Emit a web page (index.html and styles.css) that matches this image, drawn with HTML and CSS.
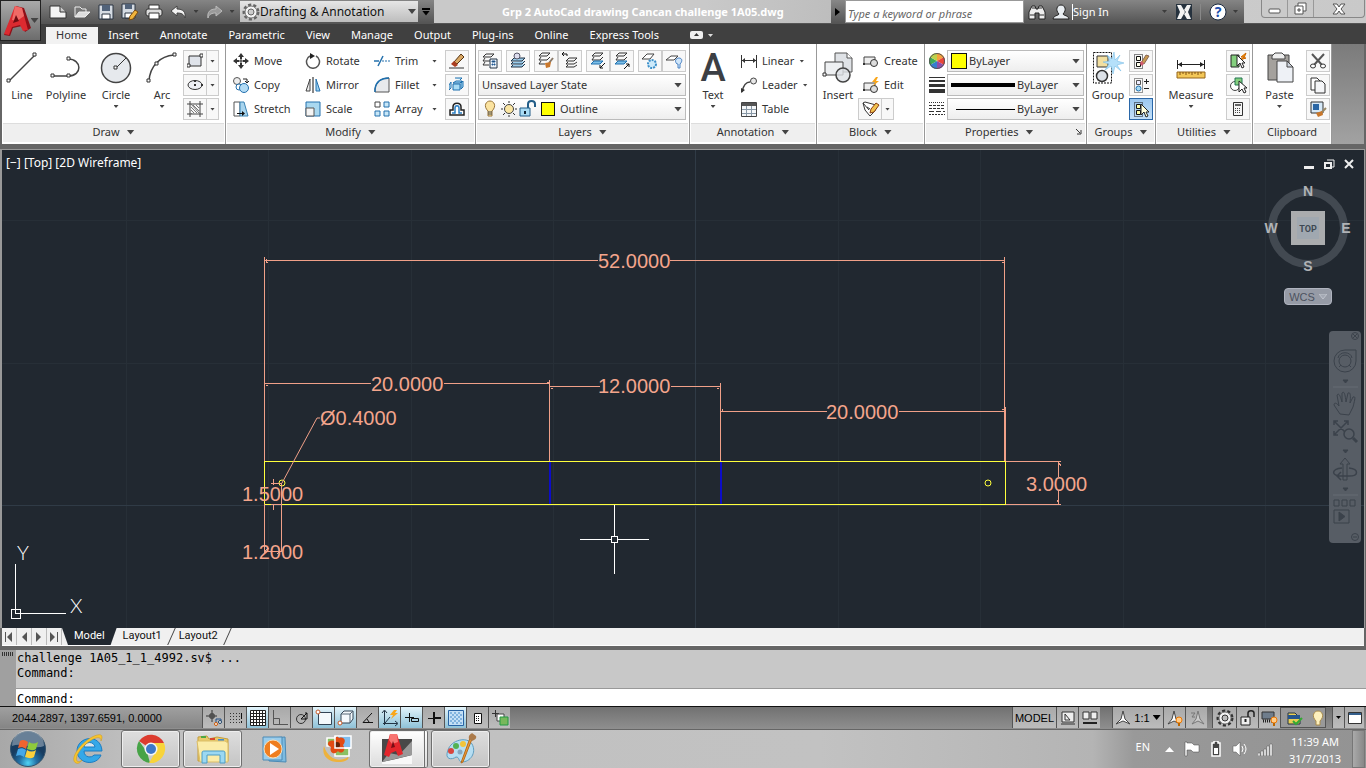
FILE: index.html
```html
<!DOCTYPE html>
<html lang="en">

<head>
    <meta charset="UTF-8">
    <meta name="viewport" content="width=device-width, initial-scale=1.0">
    <title>Grp 2 AutoCad drawing Cancan challenge 1A05.dwg</title>
    <link rel="stylesheet" href="styles.css">
</head>

<body>
    <div class="app">
        <header class="header">
            <button class="app-btn" aria-label="Application menu">
                <svg width="28" height="32" viewBox="0 0 28 32">
                    <path d="M13 1L21 3L28 23L22 27L19 21L10 23L7 31L1 30Z" fill="#8d1018" />
                    <path d="M12 1L19 3L25 25L20 26L17 20L9 22L6 30L1 29Z" fill="#dc2a30" />
                    <path d="M12 1L19 3L21 11L14 16L9 15Z" fill="#f06a66" />
                    <path d="M13 10L16 16L10 18Z" fill="#6d0c12" />
                </svg>
                <span class="arrow big"></span>
            </button>

            <div class="title-row">
                <div class="quick">
                    <button aria-label="New"><svg width="18" height="16" viewBox="0 0 18 16"><path d="M1 2H11L17 8V14H1Z" fill="#f4f4f4" stroke="#333" /><path d="M11 2V8H17" fill="#ccc" stroke="#333" /></svg></button>
                    <button aria-label="Open"><svg width="18" height="16" viewBox="0 0 18 16"><path d="M2 13V3H7L9 5H13V8" fill="#777" stroke="#eee" /><path d="M2 13L6 8H17L12 13Z" fill="#ddd" stroke="#eee" /></svg></button>
                    <button aria-label="Save"><svg width="16" height="16" viewBox="0 0 16 16"><path d="M1 1H15V15H1Z" fill="#d5dbe2" stroke="#2a3442" /><path d="M4 1H12V7H4Z" fill="#52637a" /><path d="M4 10H12V15H4Z" fill="#fff" stroke="#2a3442" /></svg></button>
                    <button aria-label="Save as"><svg width="18" height="18" viewBox="0 0 18 18"><path d="M1 1H14V15H1Z" fill="#d5dbe2" stroke="#2a3442" /><path d="M4 1H11V6H4Z" fill="#52637a" /><path d="M4 10H11V15H4Z" fill="#fff" stroke="#2a3442" /><path d="M8 17L9 13L14 7L17 9L12 16Z" fill="#f0b43c" stroke="#7a4a10" /></svg></button>
                    <button aria-label="Plot"><svg width="18" height="16" viewBox="0 0 18 16"><path d="M4 1H14V6H4Z" fill="#fff" stroke="#333" /><rect x="1" y="5" width="16" height="7" rx="2" fill="#ddd" stroke="#333" /><path d="M4 9H14V15H4Z" fill="#fff" stroke="#333" /></svg></button>
                    <button aria-label="Undo"><svg width="17" height="14" viewBox="0 0 17 14"><path d="M1 6L7 1V4C13 4 16 7 15 13C14 9 11 8 7 8V11Z" fill="#f2f2f2" stroke="#444" /></svg></button>
                    <button class="thin" aria-label="Undo list"><span class="arrow dim"></span></button>
                    <button aria-label="Redo"><svg width="17" height="14" viewBox="0 0 17 14"><path d="M16 6L10 1V4C4 4 1 7 2 13C3 9 6 8 10 8V11Z" fill="#9a9a9a" stroke="#bbb" /></svg></button>
                    <button class="thin" aria-label="Redo list"><span class="arrow dim"></span></button>
                    <div class="workspace">
                        <svg width="18" height="18" viewBox="0 0 18 18"><circle cx="9" cy="9" r="7" fill="none" stroke="#666" stroke-width="3" stroke-dasharray="3 2" /><circle cx="9" cy="9" r="6" fill="#f4f4f4" stroke="#777" /><circle cx="9" cy="9" r="3" fill="#ccc" stroke="#666" /></svg>
                        <select aria-label="Workspace"><option>Drafting &amp; Annotation</option></select>
                        <span class="arrow big"></span>
                    </div>
                    <button class="more" aria-label="Customize toolbar"><span class="bar"></span><span class="arrow big black"></span></button>
                </div>
                <h1 class="title">Grp 2 AutoCad drawing Cancan challenge 1A05.dwg</h1>
                <button class="search-toggle" aria-label="Collapse search"><svg width="6" height="8"><path d="M0 0L5 4L0 8Z" /></svg></button>
                <input class="search" type="text" placeholder="Type a keyword or phrase" aria-label="Search">
                <div class="info">
                    <button aria-label="Find"><svg width="18" height="16" viewBox="0 0 18 16"><path d="M1 15V8L4 2H7L8 5H10L11 2H14L17 8V15H11V9H7V15Z" fill="#eee" stroke="#222" /><path d="M2 11H7M11 11H16M4 4H7M11 4H14" stroke="#333" /></svg></button>
                    <button class="sign-in"><svg width="18" height="16" viewBox="0 0 18 16"><path d="M1 15C2 11 6 12 7 10C3 6 5 1 9 1S15 6 11 10C12 12 16 11 17 15Z" fill="#e9eef2" stroke="#222" /></svg><span class="user">Sign In</span><span class="arrow dim"></span></button>
                    <button aria-label="Exchange"><svg width="16" height="16" viewBox="0 0 16 16"><path d="M0 0H16V16H0Z" fill="#26323e" /><path d="M1 1H5L9 8L5 15H1L4 8Z" fill="#f3f3f3" /><path d="M15 1H11L8 6L10 8L8 10L11 15H15L12 8Z" fill="#f3f3f3" /></svg></button>
                    <span class="divider"></span>
                    <button class="help" aria-label="Help"><svg width="18" height="18" viewBox="0 0 18 18"><circle cx="9" cy="9" r="8" fill="#fff" stroke="#1b2a40" /><text x="9" y="14" text-anchor="middle" font-size="14" font-weight="700" fill="#1d4fae">?</text></svg><span class="arrow dim"></span></button>
                </div>
                <div class="window-btns">
                    <button aria-label="Minimize"><svg width="14" height="14" viewBox="0 0 14 14"><rect x="1" y="7" width="11" height="4" rx="1" fill="#fff" stroke="#555" /></svg></button>
                    <button aria-label="Restore"><svg width="14" height="14" viewBox="0 0 14 14"><path d="M4 1H12V9H4Z" fill="#fff" stroke="#555" /><path d="M1 4H9V12H1Z" fill="#fff" stroke="#555" /><path d="M4 7H6V9H4Z" fill="#ddd" stroke="#555" /></svg></button>
                    <button aria-label="Close"><svg width="14" height="14" viewBox="0 0 14 14"><path d="M1 2H5L7 5L9 2H13L9 7L13 12H9L7 9L5 12H1L5 7Z" fill="#fff" stroke="#555" /></svg></button>
                </div>
            </div>

            <nav class="tabs">
                <a href="#" class="active">Home</a>
                <a href="#">Insert</a>
                <a href="#">Annotate</a>
                <a href="#">Parametric</a>
                <a href="#">View</a>
                <a href="#">Manage</a>
                <a href="#">Output</a>
                <a href="#">Plug-ins</a>
                <a href="#">Online</a>
                <a href="#">Express Tools</a>
                <button aria-label="Minimize ribbon"><svg width="24" height="8" viewBox="0 0 24 8"><rect width="13" height="8" rx="2" fill="#eee" /><path d="M4 5L6.500 2L9 5Z" fill="#333" /><path d="M18 3H23L20.500 6Z" fill="#ddd" /></svg></button>
            </nav>
        </header>

        <main class="ribbon">
            <section class="panel draw">
                <div class="panel-body">
                    <button class="big w40"><svg width="32" height="34" viewBox="0 0 32 34"><path d="M3 31L29 5" stroke="#444" stroke-width="1.500" /><path d="M1 29H4V32H1ZM27 3H30V6H27Z" fill="#fff" stroke="#333" /></svg>Line</button>
                    <button class="big w48"><svg width="32" height="34" viewBox="0 0 32 34"><path d="M2 26H18C33 26 32 9 18 9" fill="none" stroke="#444" stroke-width="1.500" /><path d="M1 24H4V27H1ZM17 24H20V27H17ZM17 7H20V10H17Z" fill="#fff" stroke="#333" /></svg>Polyline</button>
                    <button class="big w52"><svg width="32" height="34" viewBox="0 0 32 34"><circle cx="16" cy="18" r="14.500" fill="#e6e9ed" stroke="#444" stroke-width="1.500" /><path d="M16 18L26 8" stroke="#333" /><path d="M14 16H17V19H14Z" fill="#fff" stroke="#333" /></svg>Circle<span class="arrow small"></span></button>
                    <button class="big w40"><svg width="32" height="34" viewBox="0 0 32 34"><path d="M3 31C4 16 14 6 28 5" fill="none" stroke="#444" stroke-width="1.500" /><path d="M1 29H4V32H1ZM9 12H12V15H9ZM27 3H30V6H27Z" fill="#fff" stroke="#333" /></svg>Arc<span class="arrow small"></span></button>
                    <div class="col draw-split">
                        <button class="split" aria-label="Rectangle"><svg width="16" height="16" viewBox="0 0 16 16"><path d="M2 3H14V13H2Z" fill="#dfe3ea" stroke="#333" /><path d="M0 11H3V14H0ZM13 1H16V4H13Z" fill="#fff" stroke="#333" /></svg><span class="arrow"></span></button>
                        <button class="split" aria-label="Ellipse"><svg width="16" height="16" viewBox="0 0 16 16"><ellipse cx="8" cy="8" rx="7" ry="4.500" fill="#eef0f4" stroke="#333" /><path d="M7 7H9V9H7ZM14 7H16V9H14ZM7 3H9V5H7Z" fill="#333" /></svg><span class="arrow"></span></button>
                        <button class="split" aria-label="Hatch"><svg width="16" height="16" viewBox="0 0 16 16"><path d="M3 0V16M13 0V16M0 3H16M0 13H16" stroke="#444" /><path d="M4 6L10 12M4 9L7 12M6 4L12 10M9 4L12 7M4 3L12 12M4 12L5 13" stroke="#777" /></svg><span class="arrow"></span></button>
                    </div>
                </div>
                <h2>Draw <span class="arrow big"></span></h2>
            </section>

            <section class="panel modify">
                <div class="panel-body">
                    <div class="col w72">
                        <button class="cmd"><svg width="16" height="16" viewBox="0 0 16 16"><path d="M8 0L11 4H9V6H7V4H5ZM8 16L5 12H7V10H9V12H11ZM0 8L4 5V7H6V9H4V11ZM16 8L12 11V9H10V7H12V5Z" fill="#333" /><path d="M7 7H9V9H7Z" fill="#fff" stroke="#333" /></svg>Move</button>
                        <button class="cmd"><svg width="16" height="16" viewBox="0 0 16 16"><circle cx="4" cy="4" r="3.500" fill="#eee" stroke="#555" /><path d="M10 2H14V5M12 4L14 6L16 4" fill="none" stroke="#222" /><circle cx="6" cy="10" r="3" fill="#fff" stroke="#2571ad" /><circle cx="11" cy="11" r="4.500" fill="#b4dcf5" stroke="#2571ad" /></svg>Copy</button>
                        <button class="cmd"><svg width="16" height="16" viewBox="0 0 16 16"><path d="M1 1H7V15H1Z" fill="#fff" stroke="#555" /><path d="M7 1H11L15 15H7Z" fill="#a9d5ee" stroke="#3b83b3" /><path d="M4 12H9V10L12 12.500L9 15V13H4Z" fill="#111" /></svg>Stretch</button>
                    </div>
                    <div class="col w69">
                        <button class="cmd"><svg width="16" height="16" viewBox="0 0 16 16"><path d="M11 3A6.500 6.500 0 1 1 5 3" fill="none" stroke="#555" stroke-width="1.500" /><path d="M5 0L10 3L5 6Z" fill="#222" /></svg>Rotate</button>
                        <button class="cmd"><svg width="16" height="16" viewBox="0 0 16 16"><path d="M5 2V14H1Z" fill="#eee" stroke="#444" /><path d="M8 0V16" stroke="#111" /><path d="M11 2V14H15Z" fill="#9bd0f0" stroke="#2571ad" /></svg>Mirror</button>
                        <button class="cmd"><svg width="16" height="16" viewBox="0 0 16 16"><path d="M1 1H15V15H1Z" fill="#a9d8f0" stroke="#2571ad" /><path d="M1 7H9V15H1Z" fill="#f5f5f5" stroke="#555" /></svg>Scale</button>
                    </div>
                    <div class="col w63">
                        <button class="cmd"><svg width="16" height="16" viewBox="0 0 16 16"><path d="M0 8H5M4 13L9 3" stroke="#2571ad" stroke-width="1.500" /><path d="M8 8H16" stroke="#2571ad" stroke-dasharray="2 1" /></svg>Trim<span class="arrow push"></span></button>
                        <button class="cmd"><svg width="16" height="16" viewBox="0 0 16 16"><path d="M1 15V12C2 5 7 1 15 1V15Z" fill="#e8eaed" stroke="#555" /><path d="M1 15V12C2 5 7 1 15 1" fill="none" stroke="#1d6fae" stroke-width="1.500" /></svg>Fillet<span class="arrow push"></span></button>
                        <button class="cmd"><svg width="16" height="16" viewBox="0 0 16 16"><path d="M1 1H6V6H1Z" fill="#fff" stroke="#444" /><path d="M10 1H15V6H10ZM1 10H6V15H1ZM10 10H15V15H10Z" fill="#c8e7f8" stroke="#2571ad" /></svg>Array<span class="arrow push"></span></button>
                    </div>
                    <div class="col modify-tools">
                        <button class="tool" aria-label="Erase"><svg width="16" height="16" viewBox="0 0 16 16"><path d="M5 9L12 1L15 4L8 11Z" fill="#d9a865" stroke="#553311" /><path d="M2 11L5 8L9 12L6 14Z" fill="#ab3d20" /><path d="M0 15H15" stroke="#333" /></svg></button>
                        <button class="tool" aria-label="Explode"><svg width="16" height="16" viewBox="0 0 16 16"><path d="M4 6L7 4H13L11 6ZM4 7H11V13H4ZM12 6L14 4V10L12 12Z" fill="#a9dcf5" stroke="#1d6fae" /><path d="M0 8L2 5V11L0 13ZM6 1H13L11 3" fill="#d0eefb" stroke="#1d6fae" /></svg></button>
                        <button class="tool" aria-label="Offset"><svg width="16" height="16" viewBox="0 0 16 16"><path d="M1 14V9H4V6C4 1 12 1 12 6V9H15V14Z" fill="#fff" stroke="#222" stroke-width="1.500" /><path d="M3 12H6V7C6 4 10 4 10 7V12H13" fill="none" stroke="#2a7fc4" stroke-width="1.500" /></svg></button>
                    </div>
                </div>
                <h2>Modify <span class="arrow big"></span></h2>
            </section>

            <section class="panel layers">
                <div class="panel-body">
                    <div class="col w208">
                        <div class="tool-row">
                            <button class="tool" aria-label="Layer properties"><svg width="18" height="18" viewBox="0 0 18 18"><path d="M5 2H13L10 5H2ZM4 6L2 9H9M4 10L2 13H8" fill="none" stroke="#333" /><path d="M9 7H16V16H9Z" fill="#eef4fb" stroke="#234" /><path d="M11 9H14V10H11ZM11 12H12V13H11ZM13 12H14V13H13Z" stroke="#26619c" /></svg></button>
                            <button class="tool" aria-label="Make current"><svg width="18" height="18" viewBox="0 0 18 18"><path d="M5 6H16L13 9H2ZM4 10L2 12H13L16 9M4 13L2 15H13L16 12" fill="#9bcdec" stroke="#234" /><circle cx="8" cy="4" r="3" fill="#dde" stroke="#556" /></svg></button>
                            <div class="group">
                                <button class="tool" aria-label="Match layer"><svg width="18" height="18" viewBox="0 0 18 18"><path d="M5 1H13L10 4H2ZM4 5L2 8H10L13 5M4 9L2 12H8" fill="none" stroke="#333" /><path d="M16 6L12 11" stroke="#876" stroke-width="2" /><path d="M8 11L14 10L13 15L9 16Z" fill="#c9772b" /></svg></button>
                                <button class="tool" aria-label="Previous layer"><svg width="18" height="18" viewBox="0 0 18 18"><path d="M8 6H16L13 9H5ZM7 10L5 12H13L16 10M7 13L5 15H13L16 13" fill="none" stroke="#333" /><path d="M6 2H1M3 0L1 2L3 4M6 2V4" fill="none" stroke="#111" /></svg></button>
                            </div>
                            <div class="group">
                                <button class="tool" aria-label="Isolate"><svg width="18" height="18" viewBox="0 0 18 18"><path d="M6 1H14L11 4H3ZM5 5L3 8H11L14 5" fill="none" stroke="#333" /><path d="M5 9H14L11 12H2Z" fill="#7fc0e8" stroke="#1d6fae" /><path d="M16 11L11 16M11 13V16H14" fill="none" stroke="#111" /></svg></button>
                                <button class="tool" aria-label="Unisolate"><svg width="18" height="18" viewBox="0 0 18 18"><path d="M6 1H14L11 4H3ZM5 5L3 8H11L14 5" fill="none" stroke="#333" /><path d="M5 9H14L11 12H2Z" fill="#7fc0e8" stroke="#1d6fae" /><path d="M11 17L16 12M13 12H16V15" fill="none" stroke="#111" /></svg></button>
                            </div>
                            <div class="group">
                                <button class="tool" aria-label="Freeze"><svg width="18" height="18" viewBox="0 0 18 18"><path d="M6 2H13L9 7H1Z" fill="#fff" stroke="#444" /><circle cx="11" cy="12" r="4" fill="#cdeafa" stroke="#3c8fc9" stroke-width="2" stroke-dasharray="2 1" /></svg></button>
                                <button class="tool" aria-label="Layer off"><svg width="18" height="18" viewBox="0 0 18 18"><path d="M6 4H13L9 8H1Z" fill="#fff" stroke="#444" /><path d="M12 12C9 9 11 6 14 6S18 9 15 12V16H13V12Z" fill="#d0e6fa" stroke="#4d84c4" /></svg></button>
                            </div>
                        </div>
                        <div class="combo"><select aria-label="Layer state"><option>Unsaved Layer State</option></select><span class="arrow big"></span></div>
                        <div class="combo layer-combo">
                            <svg width="54" height="18" viewBox="0 0 54 18"><path d="M4 11C-1 6 2 1 6 1S13 6 8 11V16H4Z" fill="#fbe3a0" stroke="#98753a" /><path d="M4 12H8M4 14H8" stroke="#444" /><circle cx="25" cy="9" r="4.500" fill="#fbe6a2" stroke="#444" /><path d="M25 1V3M25 15V17M17 9H19M31 9H33M19 3L21 5M31 3L29 5M19 15L21 13M31 15L29 13" stroke="#333" /><path d="M36 8H46V16H36Z" fill="#a9dcf5" stroke="#225d88" /><path d="M44 8V4C44 0 51 0 51 4V7" fill="none" stroke="#225d88" stroke-width="2" /><path d="M41 11V14" stroke="#123" stroke-width="2" /></svg>
                            <span class="swatch"></span>
                            <select aria-label="Layer"><option>Outline</option></select><span class="arrow big"></span>
                        </div>
                    </div>
                </div>
                <h2>Layers <span class="arrow big"></span></h2>
            </section>

            <section class="panel annotation">
                <div class="panel-body">
                    <button class="big w46"><span class="letter">A</span>Text<span class="arrow small"></span></button>
                    <div class="col w72">
                        <button class="cmd"><svg width="16" height="16" viewBox="0 0 16 16"><path d="M.5 2V15M15.500 2V15M1 7.500H15" stroke="#333" /><path d="M1 7.500L4 5V10ZM15 7.500L12 5V10Z" fill="#333" /></svg>Linear<span class="arrow"></span></button>
                        <button class="cmd"><svg width="16" height="16" viewBox="0 0 16 16"><path d="M1 15C2 10 4 5 9 5" fill="none" stroke="#444" stroke-width="1.500" /><path d="M0 16V11L4 13Z" fill="#333" /><circle cx="12.500" cy="4" r="3" fill="#e8e8e8" stroke="#444" /></svg>Leader<span class="arrow"></span></button>
                        <button class="cmd"><svg width="16" height="16" viewBox="0 0 16 16"><path d="M.5 1.500H15.500V15.500H.5Z" fill="#f5f7f9" stroke="#444" /><path d="M1 2H15V5H1Z" fill="#555" /><path d="M1 8.500H15M1 12.500H15M5.500 5V15M10.500 5V15" stroke="#8797a5" /></svg>Table</button>
                    </div>
                </div>
                <h2>Annotation <span class="arrow big"></span></h2>
            </section>

            <section class="panel block">
                <div class="panel-body">
                    <button class="big w42"><svg width="32" height="34" viewBox="0 0 32 34"><path d="M13 3H25L30 8V22H13Z" fill="#dfe2e6" stroke="#555" /><path d="M25 3V8H30" fill="#fff" stroke="#555" /><path d="M3 12H21V25H3Z" fill="#eef0f2" stroke="#444" /><circle cx="21" cy="25" r="7" fill="#dde1e6" fill-opacity=".8" stroke="#444" stroke-width="1.500" /><path d="M1 23H4V26H1Z" fill="#fff" stroke="#333" /></svg>Insert</button>
                    <div class="col block-cmds">
                        <button class="cmd"><svg width="16" height="16" viewBox="0 0 16 16"><path d="M1 4H12V11H1Z" fill="#eee" stroke="#444" /><circle cx="11" cy="10" r="3.500" fill="#ddd" stroke="#333" /><path d="M0 10H2V12H0Z" fill="#333" /></svg>Create</button>
                        <button class="cmd"><svg width="16" height="16" viewBox="0 0 16 16"><path d="M1 6H12V13H1Z" fill="#eee" stroke="#444" /><circle cx="11" cy="12" r="3.500" fill="#ddd" stroke="#333" /><path d="M13 0L9 5H12L10 9L16 4H13L15 0Z" fill="#f9a61a" /><path d="M0 12H2V14H0Z" fill="#333" /></svg>Edit</button>
                        <button class="split" aria-label="Edit attributes"><svg width="18" height="16" viewBox="0 0 18 16"><path d="M1 2L3 1L14 4L13 10L8 15L3 9Z" fill="#fff" stroke="#333" /><path d="M1 2L7 9M5 6L8 8" stroke="#333" /><path d="M8 12L9 8L14 2L17 4L12 11Z" fill="#f2c24e" stroke="#8a3f12" /></svg><span class="arrow"></span></button>
                    </div>
                </div>
                <h2>Block <span class="arrow big"></span></h2>
            </section>

            <section class="panel properties">
                <div class="panel-body">
                    <div class="col w16">
                        <svg width="16" height="16" viewBox="0 0 16 16"><path d="M8 8V0A8 8 0 0 1 15 4Z" fill="#f5a13c" /><path d="M8 8L15 4A8 8 0 0 1 15 12Z" fill="#ea4639" /><path d="M8 8L15 12A8 8 0 0 1 8 16Z" fill="#8f4da8" /><path d="M8 8V16A8 8 0 0 1 1 12Z" fill="#347ed0" /><path d="M8 8L1 12A8 8 0 0 1 1 4Z" fill="#3eaa57" /><path d="M8 8L1 4A8 8 0 0 1 8 0Z" fill="#bdd14a" /><circle cx="8" cy="8" r="7.500" fill="none" stroke="#555" /></svg>
                        <svg width="16" height="16" viewBox="0 0 16 16"><path d="M0 0H16V1H0ZM0 3H16V5H0ZM0 7H16V10H0ZM0 12H16V16H0Z" fill="#333" /></svg>
                        <svg width="16" height="16" viewBox="0 0 16 16"><path d="M0 1.500H16" stroke="#333" stroke-dasharray="1 1" /><path d="M0 4.500H16M0 7.500H16" stroke="#333" stroke-dasharray="3 1" /><path d="M0 10.500H16" stroke="#333" stroke-dasharray="5 2" /><path d="M0 13.500H16" stroke="#333" stroke-dasharray="2 1" /></svg>
                    </div>
                    <div class="col prop-combos">
                        <div class="combo"><span class="swatch"></span><select aria-label="Color"><option>ByLayer</option></select><span class="arrow big"></span></div>
                        <div class="combo"><span class="weight"></span><select aria-label="Lineweight"><option>ByLayer</option></select><span class="arrow big"></span></div>
                        <div class="combo"><span class="linetype"></span><select aria-label="Linetype"><option>ByLayer</option></select><span class="arrow big"></span></div>
                    </div>
                </div>
                <h2>Properties <span class="arrow big"></span><button class="launcher" aria-label="Properties palette"><svg width="6" height="6"><path d="M0 0L4 4M5 1V5H1" fill="none" stroke="#333" /></svg></button></h2>
            </section>

            <section class="panel groups">
                <div class="panel-body">
                    <button class="big w42"><svg width="32" height="34" viewBox="0 0 32 34"><path d="M1.500 2.500H19.500V33H1.500Z" fill="none" stroke="#111" stroke-dasharray="2 1" /><path d="M5 6H16V17H5Z" fill="#f2dfa0" stroke="#333" /><circle cx="10" cy="26" r="5.500" fill="#dde2e8" stroke="#333" stroke-width="1.500" /><path d="M22 2L23 10L28 5L25 11L32 13L25 15L29 21L23 16L21 24L19 16L13 20L17 14L11 12L18 11L15 5L20 9Z" fill="#b5e0fa" stroke="#6db6e3" stroke-width=".5" /></svg>Group</button>
                    <div class="col">
                        <button class="tool" aria-label="Ungroup"><svg width="18" height="18" viewBox="0 0 18 18"><path d="M2.500 2.500H10.500V16.500H2.500Z" fill="none" stroke="#111" stroke-dasharray="1 1" /><path d="M4.500 4.500H8.500V8.500H4.500ZM4.500 10.500H8.500V14.500H4.500Z" fill="#ffe" stroke="#111" /><path d="M9 11L14 3L17 4L12 12Z" fill="#c99b50" stroke="#865" /><path d="M8 12L9 9L12 11L10 14Z" fill="#d35b70" /></svg></button>
                        <button class="tool" aria-label="Group edit"><svg width="18" height="18" viewBox="0 0 18 18"><path d="M2.500 2.500H10.500V16.500H2.500Z" fill="none" stroke="#333" stroke-dasharray="1 1" /><path d="M4.500 4.500H8.500V8.500H4.500Z" fill="#eef" stroke="#555" /><circle cx="6.500" cy="12.500" r="2.500" fill="#a9dcf5" stroke="#1d6fae" /><path d="M12 5.500H17M14.500 3V8M12 12.500H17" stroke="#222" /></svg></button>
                        <button class="tool on" aria-label="Group selection"><svg width="18" height="18" viewBox="0 0 18 18"><path d="M2.500 2.500H10.500V16.500H2.500Z" fill="none" stroke="#111" stroke-dasharray="1 1" /><path d="M4.500 4.500H8.500V8.500H4.500ZM4.500 10.500H8.500V14.500H4.500Z" fill="#ffa" stroke="#111" /><path d="M9 4V15L12 12L14 17L16 16L14 12H17Z" fill="#ffd" stroke="#222" /></svg></button>
                    </div>
                </div>
                <h2>Groups <span class="arrow big"></span></h2>
            </section>

            <section class="panel utilities">
                <div class="panel-body">
                    <button class="big w70"><svg width="32" height="34" viewBox="0 0 32 34"><path d="M2.500 10V19M29.500 10V19M3 14.500H29" stroke="#222" /><path d="M3 14.500L7 12V17ZM29 14.500L25 12V17Z" fill="#222" /><path d="M2 22H30V28H2Z" fill="#f3c757" stroke="#94641a" /><path d="M5 22V25M8 22V24M11 22V25M14 22V24M17 22V25M20 22V24M23 22V25M26 22V24" stroke="#805012" /></svg>Measure<span class="arrow small"></span></button>
                    <div class="col">
                        <button class="tool" aria-label="Select all"><svg width="18" height="18" viewBox="0 0 18 18"><path d="M2 3H10V15H2Z" fill="#84cf7e" stroke="#222" /><path d="M17 1L12 5H15L11 8L17 6H15Z" fill="#f90" stroke="#c60" /><path d="M8 3V14L11 11L13 16L15 15L13 11H16Z" fill="#fff" stroke="#222" /></svg></button>
                        <button class="tool" aria-label="Quick select"><svg width="18" height="18" viewBox="0 0 18 18"><circle cx="6" cy="10" r="4.500" fill="#fff" stroke="#444" /><path d="M6 2H13V9H6Z" fill="#84cf7e" stroke="#275" /><path d="M10 5V16L13 13L15 17L17 16L15 12H18Z" fill="#fff" stroke="#222" /></svg></button>
                        <button class="tool" aria-label="Calculator"><svg width="18" height="18" viewBox="0 0 18 18"><path d="M4.500 2.500H13.500V15.500H4.500Z" fill="#f6f6f6" stroke="#333" /><path d="M6 4H12V6H6Z" fill="#666" /><path d="M6 8.500H12M6 10.500H12M6 12.500H12" stroke="#444" stroke-dasharray="1 1" /></svg></button>
                    </div>
                </div>
                <h2>Utilities <span class="arrow big"></span></h2>
            </section>

            <section class="panel clipboard">
                <div class="panel-body">
                    <button class="big w53"><svg width="32" height="34" viewBox="0 0 32 34"><path d="M4 5H25V30H4Z" fill="#a4a19d" stroke="#444" /><path d="M8 6L11 3H18L21 6V9H8Z" fill="#eee" stroke="#444" /><path d="M13 11H23L29 17V32H13Z" fill="#eef1f6" stroke="#444" /><path d="M23 11V17H29Z" fill="#cfd6e0" stroke="#444" /></svg>Paste<span class="arrow small"></span></button>
                    <div class="col">
                        <button class="tool" aria-label="Cut"><svg width="18" height="18" viewBox="0 0 18 18"><path d="M3 2L13 13M15 2L5 13" stroke="#555" stroke-width="2" /><ellipse cx="4" cy="14" rx="2.500" ry="2" fill="#fff" stroke="#333" /><ellipse cx="14" cy="14" rx="2.500" ry="2" fill="#fff" stroke="#333" /></svg></button>
                        <button class="tool" aria-label="Copy clip"><svg width="18" height="18" viewBox="0 0 18 18"><path d="M2 2H8L11 5V14H2Z" fill="#fff" stroke="#333" /><path d="M6 5H13L16 8V17H6Z" fill="#f5f6f8" stroke="#333" /></svg></button>
                        <button class="tool" aria-label="Match properties"><svg width="18" height="18" viewBox="0 0 18 18"><path d="M2 2H14V13H2Z" fill="#d6e9f8" stroke="#333" /><path d="M4 4H10V10H4Z" fill="#2a66a5" /><path d="M17 8L12 13" stroke="#986" stroke-width="2" /><path d="M7 13L13 11L14 15L9 17Z" fill="#c9772b" /></svg></button>
                    </div>
                </div>
                <h2>Clipboard</h2>
            </section>
        </main>

        <section class="canvas">
            <!-- model space: grid, part outline and dimensions -->
            <svg class="drawing" viewBox="0 150 1362 478" preserveAspectRatio="xMinYMin slice" shape-rendering="crispEdges">
                <path class="grid" d="M124.500 150V628M266.500 150V628M409.500 150V628M551.500 150V628M836.500 150V628M978.500 150V628M1121.500 150V628M1263.500 150V628M0 220.500H1362M0 363.500H1362" />
                <path class="axis" d="M693.500 150V628M0 505.500H1362" />
                <path class="blue" d="M547.500 462V504M718.500 462V504" />
                <path class="yellow" d="M262.500 461.500H1003.500V504.500H262.500Z" />
                <g shape-rendering="auto"><circle class="yellow" cx="280" cy="483" r="3" /><circle class="yellow" cx="986" cy="483" r="3" /></g>
                <path class="dim" d="M262.500 257V461M262.500 504V553M1002.500 257V461M1003.500 407V461M263 260.500H596M668 260.500H1002M263 383.500H369M442 383.500H547M547.500 380V461M548 386.500H598M669 386.500H718M718.500 383V461M719 411.500H825M897 411.500H1003M1004 461.500H1059M1004 504.500H1059M1056.500 462V477M1056.500 491V504M269 483.500H280M269 504.500H280M279.500 483V552M263 551.500H279M271.500 479V485M271.500 504V510" />
                <path class="dim" d="M264 259V262H266M1002 262H1000M264 385H266M547 382H545M549 388H551M717 388H715M720 412V409M1002 409H1000M1057 463L1059 466M1057 503L1055 500M262 551L267 548M279 551L275 554" />
                <path class="dim" shape-rendering="auto" d="M280 483L315 418H318" />
                <g class="dim-text">
                    <text x="596" y="268">52.0000</text>
                    <text x="369" y="391">20.0000</text>
                    <text x="596" y="393">12.0000</text>
                    <text x="824" y="419">20.0000</text>
                    <text x="318" y="425">Ø0.4000</text>
                    <text x="240" y="501">1.5000</text>
                    <text x="240" y="559">1.2000</text>
                    <text x="1024" y="491">3.0000</text>
                </g>
                <path class="white" d="M578 539.500H609M616 539.500H647M612.500 505V536M612.500 543V574M609.500 536.500H615.500V542.500H609.500Z" />
                <path class="white" d="M13.500 564V614M14 613.500H64M9.500 609.500H18.500V618.500H9.500Z" />
                <g class="ucs-text"><text x="15" y="560">Y</text><text x="68" y="613">X</text></g>
            </svg>
            <div class="view-label">[−] [Top] [2D Wireframe]</div>
            <div class="doc-btns">
                <button aria-label="Minimize drawing"><svg width="12" height="12"><path d="M1 8H11V11H1Z" fill="#eee" /></svg></button>
                <button aria-label="Restore drawing"><svg width="12" height="12"><path d="M4 2H11V9H9" fill="none" stroke="#eee" /><path d="M2 5H8V10H2Z" fill="none" stroke="#eee" stroke-width="2" /></svg></button>
                <button aria-label="Close drawing"><svg width="12" height="12"><path d="M2 2L10 10M10 2L2 10" stroke="#eee" stroke-width="2" /></svg></button>
            </div>
            <svg class="cube" width="90" height="90" viewBox="0 0 90 90">
                <circle cx="45" cy="45" r="36" fill="none" stroke="#424951" stroke-width="8" />
                <path d="M28 28H62V62H28Z" fill="#aaacae" />
                <path d="M34 34H56V56H34Z" fill="#a0a8b0" />
                <text class="top" x="45" y="49">TOP</text>
                <text x="45" y="13">N</text><text x="45" y="88">S</text><text x="8" y="50">W</text><text x="83" y="50">E</text>
            </svg>
            <button class="wcs">WCS <svg width="8" height="5"><path d="M0 0H8L4 5Z" fill="#a3a8b3" stroke="#bfc3cc" /></svg></button>
            <div class="navbar">
                <svg width="32" height="212" viewBox="0 0 32 212" fill="none" stroke="#3b424b">
                    <circle cx="26" cy="5" r="3.500" /><path d="M24 3L28 7M28 3L24 7" />
                    <path d="M16 19H27V30A11 11 0 1 1 16 19Z" /><circle cx="16" cy="30" r="6" /><path d="M9 27C10 20 22 20 23 27M10 36L12 34M22 36L20 34" />
                    <path d="M14 49H19L16.500 52Z" fill="#3b424b" /><path d="M4 56H29" stroke="#666c74" />
                    <path d="M11 83L5 74C5 71 8 72 10 75L8 64C10 62 11 64 13 71V62C15 60 16 62 17 71L19 62C21 61 22 63 21 72L24 66C27 65 26 68 24 76L20 84Z" />
                    <path d="M5 90L19 104M19 90L5 104M5 94V90H9M15 90H19V94M5 100V104H9" stroke-width="1.500" /><circle cx="20" cy="103" r="5" fill="#575d65" stroke-width="1.500" /><path d="M24 107L28 111" stroke-width="3" />
                    <path d="M14 119H19L16.500 122Z" fill="#3b424b" />
                    <path d="M14 149V133H11L16 127L21 133H18V149Z" /><path d="M13 137C2 138 2 145 12 145H20C30 145 30 138 20 137M12 141L8 145L12 149" stroke-width="1.500" />
                    <path d="M14 157H19L16.500 160Z" fill="#3b424b" /><path d="M4 164H29" stroke="#666c74" />
                    <path d="M5 169H10V175H5ZM13 169H18V175H13ZM21 169H26V175H21ZM5 179H20V192H5Z" /><path d="M10 181V190L16 185.500Z" fill="#3b424b" />
                    <circle cx="26" cy="206" r="3.500" /><path d="M24 206H28" />
                </svg>
            </div>
        </section>

        <nav class="layout-tabs">
            <div class="tab-nav">
                <button aria-label="First tab"><svg width="10" height="10"><path d="M1 0H2V10H1ZM8 0V10L3 5Z" /></svg></button>
                <button aria-label="Previous tab"><svg width="10" height="10"><path d="M8 0V10L3 5Z" /></svg></button>
                <button aria-label="Next tab"><svg width="10" height="10"><path d="M2 0V10L7 5Z" /></svg></button>
                <button aria-label="Last tab"><svg width="10" height="10"><path d="M1 0V10L6 5ZM8 0H9V10H8Z" /></svg></button>
            </div>
            <a href="#" class="model">Model</a>
            <a href="#">Layout1</a>
            <a href="#">Layout2</a>
        </nav>

        <section class="command">
            <div class="grip"></div>
            <div class="history">challenge 1A05_1_1_4992.sv$ ...<br>Command:</div>
            <label class="prompt">Command: <input type="text"></label>
        </section>

        <footer class="status">
            <span class="coords">2044.2897, 1397.6591, 0.0000</span>
            <div class="toggles">
                <button aria-label="Infer constraints"><svg width="18" height="18" viewBox="0 0 18 18"><path d="M1 7H12M7 1V13" stroke="#333" /><path d="M5 5H9V9H5Z" fill="none" stroke="#333" /><path d="M11 10H16V13M11 10V15" fill="none" stroke="#234f86" /><circle cx="11" cy="15" r="1.500" fill="#fff" stroke="#c50" /><circle cx="15" cy="13" r="1.500" fill="#fff" stroke="#246" /></svg></button>
                <button aria-label="Snap"><svg width="18" height="18" viewBox="0 0 18 18"><path d="M3 4.500H13M3 7.500H13M3 10.500H13M3 13.500H13" stroke="#333" stroke-dasharray="1 2" /><path d="M14.500 4V10M14.500 12V14" stroke="#111" /></svg></button>
                <button class="on" aria-label="Grid"><svg width="18" height="18" viewBox="0 0 18 18"><path d="M1.500 1.500H16.500V16.500H1.500ZM4.500 1V17M7.500 1V17M10.500 1V17M13.500 1V17M1 4.500H17M1 7.500H17M1 10.500H17M1 13.500H17" fill="#fff" stroke="#222" /></svg></button>
                <button aria-label="Ortho"><svg width="18" height="18" viewBox="0 0 18 18"><path d="M2.500 1V15.500H17M3 9.500H8.500V15" fill="none" stroke="#555" /></svg></button>
                <button aria-label="Polar"><svg width="18" height="18" viewBox="0 0 18 18"><circle cx="8" cy="10" r="4.500" fill="none" stroke="#333" /><path d="M8 10H14M8 10L14 4M12 4H14V10" fill="none" stroke="#111" /></svg></button>
                <button class="on" aria-label="Object snap"><svg width="18" height="18" viewBox="0 0 18 18"><path d="M3.500 3.500H16.500V15.500H3.500Z" fill="#f4f9fc" stroke="#345" /><circle cx="3" cy="3" r="2" fill="#fff" stroke="#c85a28" /></svg></button>
                <button class="on" aria-label="3D object snap"><svg width="18" height="18" viewBox="0 0 18 18"><path d="M4 5L7 2H16V10L13 14H4Z" fill="#f4f9fc" stroke="#345" /><path d="M4 5H13V14M13 5L16 2" fill="none" stroke="#567" /><circle cx="3" cy="14" r="2" fill="#fff" stroke="#c85a28" /></svg></button>
                <button aria-label="Object snap tracking"><svg width="18" height="18" viewBox="0 0 18 18"><path d="M13 4L4 13.500H14M8 10L10 13" fill="none" stroke="#111" /></svg></button>
                <button class="on" aria-label="Dynamic UCS"><svg width="18" height="18" viewBox="0 0 18 18"><path d="M3.500 16V2M1 4L3.500 1L6 4M2 14.500H16M14 12L17 14.500L14 17M4 14L9 8" fill="none" stroke="#234" /><path d="M13 1L9 6H12L10 10L17 4H14L16 1Z" fill="#f9a61a" /></svg></button>
                <button class="on" aria-label="Dynamic input"><svg width="18" height="18" viewBox="0 0 18 18"><path d="M2 8.500H11M6.500 4V13M8.500 9.500H15.500V12.500H8.500Z" fill="none" stroke="#111" /></svg></button>
                <button aria-label="Lineweight"><svg width="18" height="18" viewBox="0 0 18 18"><path d="M3 9.500H9" stroke="#111" /><path d="M9 9H16M9 3V15" stroke="#111" stroke-width="2" /></svg></button>
                <button class="on" aria-label="Transparency"><svg width="18" height="18" viewBox="0 0 18 18"><path d="M1.500 1.500H16.500V16.500H1.500Z" fill="#c4e0f6" stroke="#2864a5" /><path d="M3 4H15M3 8H15M3 12H15" stroke="#81b3de" stroke-width="2" stroke-dasharray="2 2" /><path d="M5 6H15M5 10H15M5 14H15" stroke="#81b3de" stroke-width="2" stroke-dasharray="2 2" /></svg></button>
                <button aria-label="Quick properties"><svg width="18" height="18" viewBox="0 0 18 18"><path d="M5.500 4.500H12.500V14.500H5.500Z" fill="#fff" stroke="#111" /><path d="M7 7.500H11M7 9.500H11M7 11.500H11" stroke="#111" stroke-dasharray="1 1" /></svg></button>
                <button aria-label="Selection cycling"><svg width="18" height="18" viewBox="0 0 18 18"><path d="M1 4.500H8M4.500 1V8" stroke="#333" /><path d="M6 5H13V12H6Z" fill="#fff" stroke="#444" /><path d="M9 8H17V16H9Z" fill="#78b85c" stroke="#294" /></svg></button>
            </div>
            <div class="status-right">
                <button class="text-btn">MODEL</button>
                <button aria-label="Model"><svg width="16" height="16" viewBox="0 0 16 16"><path d="M2 2H14V12H2Z" fill="#eee" stroke="#333" /><path d="M5 4L10 10H5Z" fill="none" stroke="#333" /><path d="M1 14H15" stroke="#333" /></svg></button>
                <button aria-label="Quick view"><svg width="16" height="16" viewBox="0 0 16 16"><path d="M1 2H7V9H1ZM9 2H15V9H9Z" fill="#eee" stroke="#333" /><path d="M1 13H15" stroke="#222" stroke-width="2" /></svg></button>
                <button class="text-btn scale"><svg width="16" height="16" viewBox="0 0 16 16"><path d="M8 1L10 9L15 14L8 11L1 14L6 9Z" fill="#fff" stroke="#444" /></svg>1:1<span class="arrow big black"></span></button>
                <button aria-label="Annotation visibility"><svg width="16" height="16" viewBox="0 0 16 16"><path d="M7 1L9 9L13 14L7 11L1 14L5 9Z" fill="#fff" stroke="#444" /><circle cx="12" cy="10" r="3" fill="#fc8" stroke="#e70" /><path d="M12 13V16" stroke="#b60" stroke-width="2" /></svg></button>
                <button aria-label="Annotation autoscale"><svg width="16" height="16" viewBox="0 0 16 16"><path d="M9 1L11 9L15 14L9 11L3 14L7 9Z" fill="#ccc" stroke="#777" /><path d="M2 3H6L3 7H6" fill="none" stroke="#777" /></svg></button>
                <button class="spaced" aria-label="Workspace switching"><svg width="18" height="18" viewBox="0 0 18 18"><circle cx="9" cy="9" r="7" fill="none" stroke="#333" stroke-width="3" stroke-dasharray="3 2" /><circle cx="9" cy="9" r="6" fill="#f2f2f2" stroke="#777" /><circle cx="9" cy="9" r="3" fill="#bbb" stroke="#333" /></svg></button>
                <button aria-label="Toolbar lock"><svg width="16" height="16" viewBox="0 0 16 16"><path d="M1 7H10V15H1Z" fill="#eee" stroke="#222" /><path d="M8 7V3C8 0 14 0 14 3V7" fill="none" stroke="#222" stroke-width="1.500" /><path d="M5.500 9V12" stroke="#222" stroke-width="2" /></svg></button>
                <button aria-label="Hardware acceleration"><svg width="17" height="16" viewBox="0 0 17 16"><path d="M1 2H13V9H1Z" fill="#6f7d8c" stroke="#333" /><path d="M2 11H12" stroke="#222" stroke-width="3" stroke-dasharray="1 1" /><circle cx="13" cy="10" r="3" fill="#fc8" stroke="#e70" /><path d="M13 13V16" stroke="#b60" stroke-width="2" /></svg></button>
                <div class="status-tray">
                    <svg width="16" height="16" viewBox="0 0 16 16"><path d="M1 3H8L13 8V14H1Z" fill="#e9cf55" stroke="#234" /><path d="M1 5H13V9H1Z" fill="#25558c" /><path d="M6 11L9 14L15 8" fill="none" stroke="#3a3" stroke-width="2" /></svg>
                    <svg width="12" height="16" viewBox="0 0 12 16"><path d="M4 11C-1 6 2 1 6 1S13 6 8 11V15H4Z" fill="#fdf0bd" stroke="#a88a4a" /></svg>
                </div>
                <button class="menu" aria-label="Status bar menu"><span class="arrow black"></span></button>
                <button class="clean" aria-label="Clean screen"><svg width="16" height="16" viewBox="0 0 16 16"><path d="M1.500 2.500H14.500V13.500H1.500Z" fill="#fff" stroke="#333" /><path d="M2 3H14V5H2Z" fill="#345f8c" /></svg></button>
            </div>
        </footer>
    </div>

    <div class="taskbar">
        <button class="task" aria-label="Start"><svg width="38" height="38" viewBox="0 0 38 38">
            <defs><radialGradient id="orb" cx=".5" cy=".9"><stop offset="0" stop-color="#50d4f5" /><stop offset=".5" stop-color="#2270a5" /><stop offset="1" stop-color="#173c60" /></radialGradient></defs>
            <circle cx="19" cy="19" r="17.500" fill="url(#orb)" stroke="#35536b" /><path d="M3 16A16 16 0 0 1 35 16C25 20 13 12 3 16Z" fill="#fff" opacity=".35" />
            <path d="M11 11C14 9 16 10 19 12L17 19C14 17 12 17 9 18Z" fill="#ef6430" /><path d="M20 12C23 14 26 14 29 12L27 19C24 21 21 20 18 19Z" fill="#8fca3c" /><path d="M9 19C12 18 14 18 17 20L15 27C12 25 10 25 7 26Z" fill="#45a8e8" /><path d="M18 20C21 22 24 22 27 20L25 27C22 29 19 28 16 27Z" fill="#fbd03c" />
        </svg></button>
        <button class="task" aria-label="Internet Explorer"><svg width="34" height="34" viewBox="0 0 34 34"><path d="M30 19H12C12 26 20 26 22 23H29C25 34 6 33 5 19C5 4 29 1 30 19Z" fill="#35a8e8" stroke="#1d7dc2" /><path d="M12 15C13 9 22 9 23 15Z" fill="#d9e5ec" stroke="#1d7dc2" /><path d="M4 31C-3 28 7 12 20 5C28 1 32 2 29 9C29 4 24 5 18 9C10 14 2 25 5 29C6 30 8 30 10 28C8 31 6 32 4 31Z" fill="#f6c42e" stroke="#cf9718" stroke-width=".5" /></svg></button>
        <button class="task open" aria-label="Chrome"><svg width="30" height="30" viewBox="0 0 30 30"><path d="M15 15L3 7A14.500 14.500 0 0 1 28 9H15Z" fill="#dc3b2e" /><path d="M3 7L11 18L14 29A14.500 14.500 0 0 1 3 7Z" fill="#47a347" /><path d="M28 9H15L20 17L13 29A14.500 14.500 0 0 0 28 9Z" fill="#f8d43a" /><circle cx="15" cy="15" r="6.500" fill="#f5f5f5" /><circle cx="15" cy="15" r="5" fill="#3e78c8" /></svg></button>
        <button class="task open" aria-label="Explorer"><svg width="34" height="32" viewBox="0 0 34 32"><path d="M2 4L11 3L13 6L21 4L32 6V28H2Z" fill="#e8ca6a" stroke="#c49d3c" /><path d="M5 3H10V5H5Z" fill="#4da843" /><path d="M14 5H19V7H14Z" fill="#d8462c" /><path d="M22 6H28V8H22Z" fill="#3e8ccf" /><path d="M1 8H29L32 10V29H4Z" fill="#fbeca8" stroke="#dbbd67" /><path d="M6 30V20C6 18 7 18 9 18H26C28 18 29 18 29 20V30H24V22H11V30Z" fill="#9bd8f2" stroke="#4c9cc5" /></svg></button>
        <button class="task" aria-label="Media Player"><svg width="28" height="28" viewBox="0 0 28 28"><path d="M8 3L24 2L25 27L8 26Z" fill="#7dbbe0" stroke="#4b8ab5" /><path d="M2 2H21V25H2Z" fill="#9acdec" stroke="#4b8ab5" /><circle cx="12" cy="14" r="9" fill="#ef7e20" stroke="#f9dfb8" /><path d="M9 8V20L18 14Z" fill="#fff" /></svg></button>
        <button class="task" aria-label="Photo Gallery"><svg width="32" height="30" viewBox="0 0 32 30"><path d="M3 12C0 22 8 29 20 28C28 27 28 23 27 23C18 29 7 25 3 12Z" fill="#edb23c" /><path d="M6 4H15V12H6Z" fill="#8bc063" stroke="#fff" stroke-width="1.500" /><path d="M14 14H28V22H14Z" fill="#8bc063" stroke="#fff" stroke-width="1.500" /><path d="M14 2H30V14H14Z" fill="#80bdec" stroke="#fff" stroke-width="1.500" /><path d="M18 4C23 2 26 7 22 11C26 17 20 21 17 17C13 22 8 18 10 13C4 11 8 5 13 7C14 2 17 2 18 4Z" fill="#e24b12" /><circle cx="16" cy="11" r="3" fill="#642208" /><path d="M14 2V14H30" fill="none" stroke="#fff" stroke-width="1.500" /></svg></button>
        <button class="task open active" aria-label="AutoCAD"><svg width="32" height="32" viewBox="0 0 32 32"><path d="M1 6H31V31H1Z" fill="#f8f8f8" /><path d="M1 6H31V22L15 26L1 29Z" fill="#484848" /><path d="M1 29L8 20L18 22L31 8V22Z" fill="#999" /><path d="M9 1H16L22 21L17 23L15 18L10 20L8 24L3 22Z" fill="#e3262c" /><path d="M9 1H16L17 9L11 11L8 7Z" fill="#f77370" /><path d="M12 8L14 14L10 15Z" fill="#770d14" /></svg></button>
        <button class="task open" aria-label="Paint"><svg width="34" height="32" viewBox="0 0 34 32"><path d="M4 17C7 7 23 3 28 11C33 20 26 29 18 29C14 29 16 24 12 24C8 27 0 27 4 17Z" fill="#b6def2" stroke="#5d9dc0" /><circle cx="7" cy="18" r="3" fill="#d8463e" /><circle cx="12" cy="13" r="3" fill="#52b254" /><circle cx="19" cy="11" r="3" fill="#f2c43a" /><circle cx="16" cy="19" r="2.500" fill="#86a8c0" /><path d="M28 6L19 29L17 30L18 27L26 5Z" fill="#ef9b36" stroke="#b36a1b" /><path d="M25 6C24 2 27 1 28 0L32 3C33 5 31 7 28 8Z" fill="#ab7a4a" /></svg></button>
        <div class="tray">
            <span class="lang">EN</span>
            <button aria-label="Show hidden icons"><svg width="9" height="5"><path d="M0 5L4.500 0L9 5Z" fill="#fff" /></svg></button>
            <button aria-label="Action center"><svg width="16" height="16" viewBox="0 0 16 16"><path d="M1 1V15H3V9H7L9 11H15V4H10L8 2H3V1Z" fill="#fff" stroke="#444" stroke-width=".5" /></svg></button>
            <button aria-label="Battery"><svg width="12" height="16" viewBox="0 0 12 16"><path d="M4 0H8V2H10V15H2V2H4Z" fill="#444" stroke="#fff" stroke-width="1.500" /><path d="M4 7H8V13H4Z" fill="#fff" /></svg></button>
            <button aria-label="Volume"><svg width="16" height="16" viewBox="0 0 16 16"><path d="M1 5H4L8 1V15L4 11H1Z" fill="#fff" stroke="#555" stroke-width=".5" /><path d="M10 5Q12 8 10 11M12 3Q16 8 12 13" fill="none" stroke="#fff" /></svg></button>
            <button aria-label="Network"><svg width="16" height="14" viewBox="0 0 16 14"><path d="M0 11H2V14H0ZM3 9H5V14H3ZM6 7H8V14H6ZM9 4H11V14H9ZM12 2H14V14H12Z" fill="#fff" stroke="#555" stroke-width=".5" /></svg></button>
        </div>
        <div class="clock">11:39 AM<br>31/7/2013</div>
        <button class="desktop" aria-label="Show desktop"></button>
    </div>
</body>

</html>
```
FILE: styles.css
```css
* {
    box-sizing: border-box;
}

body {
    margin: 0;
    height: 100vh;
    display: flex;
    flex-direction: column;
    overflow: hidden;
    background-color: #666;
    font-family: "Noto Sans", "Open Sans", sans-serif;
    font-size: 11px;
    line-height: 16px;
    color: #333;
}

button,
select,
input {
    font: inherit;
    color: inherit;
    border: none;
    background: none;
    margin: 0;
    padding: 0;
}

button {
    display: flex;
    align-items: center;
    justify-content: center;
}

svg {
    flex: none;
    display: block;
}

a {
    color: inherit;
    text-decoration: none;
}

select {
    appearance: none;
    flex: 1;
    min-width: 0;
    outline: none;
}

.arrow {
    flex: none;
    width: 5px;
    height: 3px;
    background-color: #444;
    clip-path: polygon(0 0, 100% 0, 50% 100%);
}

.arrow.big {
    width: 8px;
    height: 5px;
}

.arrow.black {
    background-color: #000;
}

.arrow.dim {
    background-color: #3c3c3c;
}

.app {
    flex: 1;
    min-height: 0;
    display: flex;
    flex-direction: column;
}

/* title bar and ribbon tabs */
.header {
    display: grid;
    grid-template-columns: 41px 1fr;
    grid-template-rows: 24px 20px;
    background-color: #404040;
}

.app-btn {
    grid-row: 1 / 3;
    height: 41px;
    border: 1px solid #222;
    background: linear-gradient(#aaa, #6c6c6c);
}

.title-row {
    display: flex;
    min-width: 0;
    background: linear-gradient(100deg, #c9c9c9 50%, #bdbdbd 60%, #cfcfcf 61%, #c9c9c9);
    border-bottom: 1px solid #555;
}

.quick,
.info {
    display: flex;
    align-items: center;
    background: linear-gradient(#858585, #555);
}

.quick {
    padding-left: 5px;
}

.quick > button {
    width: 24px;
    height: 22px;
}

.quick > button.thin {
    width: 12px;
}

.workspace {
    display: flex;
    align-items: center;
    width: 178px;
    height: 21px;
    margin-left: 2px;
    padding: 0 2px;
    font-size: 12px;
    color: #111;
    background: linear-gradient(#e6e6e6, #bdbdbd);
}

.quick > button.more {
    width: 16px;
    flex-direction: column;
    gap: 1px;
}

.bar {
    width: 8px;
    height: 2px;
    background-color: #000;
}

.title {
    flex: 1;
    margin: 0;
    padding-left: 68px;
    font-size: 11px;
    font-weight: 700;
    line-height: 24px;
    color: #fff;
    white-space: nowrap;
    overflow: hidden;
}

.search-toggle {
    width: 14px;
    background: linear-gradient(#888, #555);
}

.search {
    width: 179px;
    padding: 4px 2px 0;
    border: 1px solid #999;
    background-color: #fff;
    font-style: italic;
}

.search::placeholder {
    color: #666;
}

.info {
    width: 220px;
    padding-left: 4px;
    color: #fff;
}

.info button:first-child {
    width: 18px;
    margin-right: 6px;
}

.info .sign-in {
    width: 115px;
    gap: 2px;
    margin-right: 9px;
}

.user {
    border-left: 1px solid #fff;
}

.info .sign-in .arrow {
    margin-left: auto;
}

.divider {
    width: 1px;
    height: 16px;
    margin: 0 8px;
    background-color: #888;
}

.info .help {
    gap: 6px;
}

.window-btns {
    display: flex;
    width: 104px;
    height: 18px;
    margin: 0 1px 0 17px;
    border: 1px solid #888;
    border-top: none;
    border-radius: 0 0 4px 4px;
}

.window-btns button {
    flex: 1;
    border-right: 1px solid #999;
}

.window-btns button:last-child {
    flex: 2;
    border-right: none;
}

.tabs {
    display: flex;
    align-items: flex-end;
    padding-left: 5px;
    color: #fff;
}

.tabs a {
    height: 17px;
    padding: 0 11px 0 10px;
    white-space: nowrap;
}

.tabs .active {
    color: #333;
    background-color: #f2f2f2;
}

.tabs button {
    height: 19px;
    margin-left: 20px;
}

/* ribbon */
.ribbon {
    display: flex;
    height: 100px;
    margin: 0 2px;
    background: linear-gradient(#7b7b7b, #a2a2a2);
}

.panel {
    flex: none;
    display: flex;
    flex-direction: column;
    border-right: 1px solid #999;
    background-color: #fff;
}

.panel h2 {
    flex: 1;
    display: flex;
    align-items: center;
    justify-content: center;
    gap: 7px;
    margin: 0 1px 2px;
    padding-bottom: 2px;
    font-size: 11px;
    font-weight: 400;
    background-color: #efefef;
    border-top: 1px solid #ddd;
}

.panel-body {
    display: flex;
    height: 80px;
    padding-top: 6px;
}

.draw {
    width: 224px;
}

.modify {
    width: 250px;
}

.layers {
    width: 214px;
}

.annotation {
    width: 127px;
}

.block {
    width: 108px;
}

.properties {
    width: 162px;
}

.groups {
    width: 69px;
}

.utilities {
    width: 97px;
}

.clipboard {
    width: 79px;
}

.w16 {
    width: 16px;
}

.w40 {
    width: 40px;
}

.w42 {
    width: 42px;
}

.w46 {
    width: 46px;
}

.w48 {
    width: 48px;
}

.w52 {
    width: 52px;
}

.w53 {
    width: 53px;
}

.w63 {
    width: 63px;
}

.w69 {
    width: 69px;
}

.w70 {
    width: 70px;
}

.w72 {
    width: 72px;
}

.w208 {
    width: 208px;
}

.big {
    flex-direction: column;
    justify-content: flex-start;
    white-space: nowrap;
}

.big > svg,
.letter {
    height: 34px;
    margin-bottom: 3px;
}

.big .arrow.small {
    margin-top: 2px;
}

.letter {
    font-family: Roboto, sans-serif;
    font-size: 38px;
    font-weight: 500;
    line-height: 36px;
    color: #3c3f44;
}

.col {
    display: grid;
    grid-template-rows: repeat(3, 22px);
    row-gap: 2px;
    align-items: center;
    align-content: start;
}

.cmd {
    justify-content: flex-start;
    gap: 5px;
    height: 22px;
    white-space: nowrap;
}

.cmd .push {
    margin-left: auto;
}

.split,
.tool {
    height: 22px;
    border: 1px solid #ccc;
    background-color: #f8f8f8;
}

.tool {
    width: 24px;
}

.tool.on {
    border-color: #2a67a8;
    background: linear-gradient(#9cc8f0, #c4e0f8);
}

.split {
    width: 36px;
    justify-content: space-between;
    padding: 0 3px;
    background-image: linear-gradient(90deg, transparent 22px, #ccc 22px, #ccc 23px, transparent 23px);
}

.draw-split {
    margin-left: 1px;
}

.modify .panel-body {
    padding-left: 7px;
}

.modify-tools {
    margin-left: 8px;
}

.layers .panel-body {
    padding-left: 2px;
}

.tool-row {
    display: flex;
    justify-content: space-between;
}

.group {
    display: flex;
}

.combo {
    display: flex;
    align-items: center;
    height: 22px;
    padding: 0 3px;
    border: 1px solid #bbb;
    background: linear-gradient(#fff, #eee);
}

.layer-combo {
    padding-left: 5px;
}

.annotation .col {
    margin-left: 5px;
}

.block-cmds {
    margin-left: -1px;
}

.block-cmds .cmd {
    padding-left: 5px;
}

.properties .panel-body {
    padding-left: 4px;
    gap: 2px;
}

.prop-combos {
    width: 137px;
}

.swatch {
    width: 16px;
    height: 16px;
    margin-right: 2px;
    border: 1px solid #111;
    background-color: #ff0;
}

.layer-combo .swatch {
    width: 14px;
    height: 14px;
    margin: 0 5px 0 3px;
}

.weight {
    width: 64px;
    height: 4px;
    margin-right: 2px;
    background-color: #000;
}

.linetype {
    width: 59px;
    height: 1px;
    margin: 0 2px 0 5px;
    background-color: #000;
}

.properties h2 {
    padding-left: 39px;
}

.launcher {
    margin-left: auto;
    padding-right: 3px;
}

/* drawing area */
.canvas {
    position: relative;
    flex: 1;
    min-height: 0;
    margin: 5px 1px 0 0;
    border: 1px solid #999;
    border-width: 1px 1px 0 2px;
    background-color: #212830;
    overflow: hidden;
}

.drawing {
    width: 100%;
    height: 100%;
}

.drawing path,
.drawing circle {
    fill: none;
}

.grid {
    stroke: #272f37;
}

.axis {
    stroke: #303b46;
}

.yellow {
    stroke: #ffff3c;
}

.blue {
    stroke: #0c0cc8;
    stroke-width: 2;
}

.dim {
    stroke: #f0a088;
}

.white {
    stroke: #fff;
}

.dim-text {
    font-family: "Liberation Sans", Arial, sans-serif;
    font-size: 20px;
    fill: #f4a58c;
}

.ucs-text {
    font-family: Lato, sans-serif;
    font-size: 20px;
    font-weight: 300;
    fill: #fff;
}

.view-label {
    position: absolute;
    top: 5px;
    left: 4px;
    font-size: 12px;
    color: #fff;
}

.doc-btns {
    position: absolute;
    top: 8px;
    right: 9px;
    display: flex;
    gap: 8px;
}

.cube {
    position: absolute;
    top: 33px;
    right: 11px;
    overflow: visible;
}

.cube text {
    font-family: "Liberation Sans", Arial, sans-serif;
    font-size: 14px;
    font-weight: 700;
    text-anchor: middle;
    fill: #b0b3b6;
}

.cube .top {
    font-family: Roboto, sans-serif;
    font-size: 9px;
    fill: #3e4853;
}

.wcs {
    position: absolute;
    top: 138px;
    right: 32px;
    width: 48px;
    height: 17px;
    gap: 4px;
    border: 1px solid #b0b4bf;
    border-radius: 4px;
    background-color: #969ba6;
    color: #4c525e;
    font-family: "Liberation Sans", Arial, sans-serif;
}

.navbar {
    position: absolute;
    top: 181px;
    right: 3px;
    border-radius: 4px;
    background-color: #575d65;
}

/* layout tabs */
.layout-tabs {
    display: flex;
    height: 18px;
    margin: 0 2px;
    background-color: #f0f0f0;
    border-bottom: 1px solid #fff;
    font-family: Roboto, sans-serif;
    color: #111;
}

.tab-nav {
    display: flex;
}

.tab-nav button {
    width: 15px;
    border-right: 1px solid #bbb;
    fill: #555;
}

.layout-tabs a {
    position: relative;
    padding: 0 11px 0 6px;
}

.layout-tabs a::after {
    content: "";
    position: absolute;
    top: 0;
    right: 1px;
    height: 17px;
    border-right: 1px solid #444;
    transform: skewX(-24deg);
}

.layout-tabs .model {
    padding: 0 12px;
    color: #fff;
    background-color: #212830;
    clip-path: polygon(0 0, 100% 0, calc(100% - 6px) 100%, 6px 100%);
}

/* command line */
.command {
    display: grid;
    grid-template-columns: 16px 1fr;
    grid-template-rows: 38px 18px;
    margin-top: 4px;
    background-color: #c8c8c8;
    font-family: "DejaVu Sans Mono", monospace;
    font-size: 12px;
    line-height: 15px;
    color: #000;
}

.grip {
    grid-row: 1 / 3;
    background: repeating-linear-gradient(90deg, #333 0 1px, transparent 1px 2px) 2px 2px / 12px 4px no-repeat, #a0a0a0;
}

.history {
    padding: 1px;
}

.prompt {
    display: flex;
    align-items: center;
    gap: 7px;
    padding: 3px 0 0 1px;
    border-top: 1px solid #999;
    background-color: #fff;
}

.prompt input {
    flex: 1;
    outline: none;
}

/* status bar */
.status {
    display: flex;
    align-items: stretch;
    height: 23px;
    padding: 0 2px 1px 0;
    border-top: 1px solid #111;
    background: linear-gradient(#717171, #8f8f8f);
    font-family: "Liberation Sans", Arial, sans-serif;
    color: #000;
}

.coords {
    width: 202px;
    padding-left: 12px;
    line-height: 22px;
    background: linear-gradient(#a0a0a0, #858585);
}

.toggles,
.status-right {
    display: flex;
}

.status-right {
    margin-left: auto;
}

.status button {
    width: 22px;
    border-left: 1px solid #555;
    background: linear-gradient(#a9a9a9, #bcbcbc);
}

.status button.on {
    background: linear-gradient(#e2f3fa, #8fc2d8);
}

.status button.text-btn {
    width: 44px;
}

.status button.scale {
    width: 51px;
    gap: 3px;
    margin-left: 12px;
}

.status button.spaced {
    width: 24px;
    margin-left: 5px;
}

.status-tray {
    display: flex;
    align-items: center;
    gap: 9px;
    width: 46px;
    padding-left: 6px;
    border: 1px solid #555;
    background-color: #999;
}

.status button.menu {
    width: 12px;
    margin-left: 6px;
}

.status button.clean {
    width: 20px;
}

/* windows taskbar */
.taskbar {
    display: flex;
    flex: none;
    align-items: stretch;
    height: 39px;
    border-top: 1px solid #666;
    background: linear-gradient(90deg, #a8a8a8, #c0c0c0 10%, #c2c2c2 60%, #b4b4b4 80%, #999 83%, #939393);
}

.task {
    width: 59px;
    margin-right: 3px;
    border: 1px solid transparent;
    border-radius: 3px;
}

.task:first-child {
    width: 56px;
}

.task.open {
    border-color: #6f6f6f;
    background: linear-gradient(#dedede, #c4c4c4);
    box-shadow: inset 0 0 0 1px #eee;
}

.task.active {
    background: linear-gradient(#fff, #dcdcdc);
    border-right-width: 4px;
    border-right-style: double;
}

.tray {
    display: flex;
    align-items: center;
    gap: 10px;
    margin-left: auto;
    padding-right: 4px;
    color: #fff;
}

.tray .lang {
    margin: 0 5px 4px 0;
}

.clock {
    width: 74px;
    padding-top: 3px;
    color: #fff;
    text-align: center;
    line-height: 17px;
}

.desktop {
    width: 13px;
    margin-right: 1px;
    border: 1px solid #777;
    background: linear-gradient(90deg, #aaa, #888);
}
```
